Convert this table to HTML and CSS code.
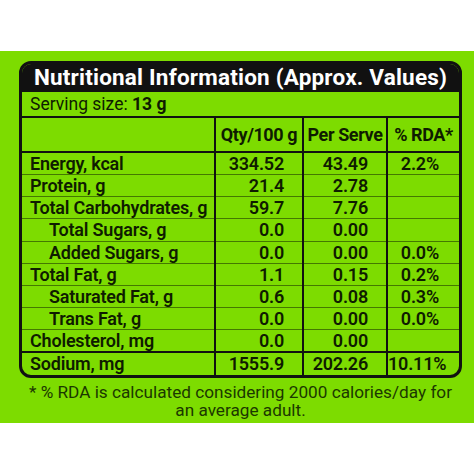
FILE: index.html
```html
<!DOCTYPE html>
<html lang="en">
<head>
    <meta charset="UTF-8">
    <meta name="viewport" content="width=device-width, initial-scale=1.0">
    <title>Nutritional Information</title>
    <link rel="stylesheet" href="styles.css">
</head>
<body>
    <section class="panel">
        <div class="label-box">
            <h1 class="label-title">Nutritional Information (Approx. Values)</h1>
            <div class="serving">Serving size: <strong>13 g</strong></div>
            <table class="facts">
                <colgroup>
                    <col class="col-name">
                    <col class="col-qty">
                    <col class="col-serve">
                    <col class="col-rda">
                </colgroup>
                <thead>
                    <tr>
                        <th></th>
                        <th>Qty/100 g</th>
                        <th>Per Serve</th>
                        <th>% RDA*</th>
                    </tr>
                </thead>
                <tbody>
                    <tr><td>Energy, kcal</td><td>334.52</td><td>43.49</td><td>2.2%</td></tr>
                    <tr><td>Protein, g</td><td>21.4</td><td>2.78</td><td></td></tr>
                    <tr><td>Total Carbohydrates, g</td><td>59.7</td><td>7.76</td><td></td></tr>
                    <tr><td class="sub">Total Sugars, g</td><td>0.0</td><td>0.00</td><td></td></tr>
                    <tr><td class="sub">Added Sugars, g</td><td>0.0</td><td>0.00</td><td>0.0%</td></tr>
                    <tr><td>Total Fat, g</td><td>1.1</td><td>0.15</td><td>0.2%</td></tr>
                    <tr><td class="sub">Saturated Fat, g</td><td>0.6</td><td>0.08</td><td>0.3%</td></tr>
                    <tr><td class="sub">Trans Fat, g</td><td>0.0</td><td>0.00</td><td>0.0%</td></tr>
                    <tr><td>Cholesterol, mg</td><td>0.0</td><td>0.00</td><td></td></tr>
                    <tr class="last"><td>Sodium, mg</td><td>1555.9</td><td>202.26</td><td>10.11%</td></tr>
                </tbody>
            </table>
        </div>
        <p class="note">* % RDA is calculated considering 2000 calories/day for<br>an average adult.</p>
    </section>
</body>
</html>
```

FILE: styles.css
```css
:root {
    --lime-color: #7ddc00;
    --ink-color: #0f1c00;
    --line-color: #111111;
    --row-line-color: rgba(0, 0, 0, 0.45);
    --note-color: #1b3800;
    --white-color: #ffffff;
}

/* --- global --- */
* {
    margin: 0;
    padding: 0;
    box-sizing: border-box;
}

body {
    font-family: Roboto, "Liberation Sans", Arial, sans-serif;
    background-color: var(--white-color);
    color: var(--ink-color);
    padding-top: 51px;
}

/* --- green panel --- */
.panel {
    background-color: var(--lime-color);
    height: 372px;
    padding: 10px 12px 0 19px;
}

.label-box {
    border: 3px solid var(--line-color);
    border-radius: 12px;
    overflow: hidden;
}

.label-title {
    background-color: var(--line-color);
    color: var(--white-color);
    font-size: 22.5px;
    font-weight: 700;
    letter-spacing: 0.2px;
    text-align: center;
    height: 28px;
    line-height: 26px;
}

.serving {
    height: 26px;
    line-height: 25px;
    padding-left: 8px;
    font-size: 17.5px;
    border-bottom: 2px solid var(--line-color);
}

/* --- table --- */
.facts {
    width: 100%;
    border-collapse: collapse;
    table-layout: fixed;
    font-size: 18px;
    font-weight: 600;
    letter-spacing: -0.2px;
    white-space: nowrap;
}

.col-name { width: 193px; }
.col-qty { width: 88px; }
.col-serve { width: 84px; }

.facts th {
    height: 34px;
    text-align: center;
    letter-spacing: -0.4px;
    border-bottom: 2px solid var(--line-color);
    border-left: 2px solid var(--line-color);
}

.facts th:first-child {
    border-left: none;
}

.facts td {
    height: 22.2px;
    line-height: 20px;
    padding: 1px 18px 0 0;
    text-align: right;
    border-bottom: 1px solid var(--row-line-color);
    border-left: 2px solid var(--line-color);
}

.facts td:first-child {
    text-align: left;
    padding-left: 8px;
    border-left: none;
}

.facts td:last-child {
    padding-right: 20px;
}

.facts td.sub {
    padding-left: 27px;
}

.facts tr.last td {
    border-top: 2px solid var(--line-color);
    border-bottom: none;
}

/* --- footnote --- */
.note {
    margin-top: 5px;
    font-size: 17.2px;
    line-height: 18.5px;
    text-align: center;
    color: var(--note-color);
}
```
